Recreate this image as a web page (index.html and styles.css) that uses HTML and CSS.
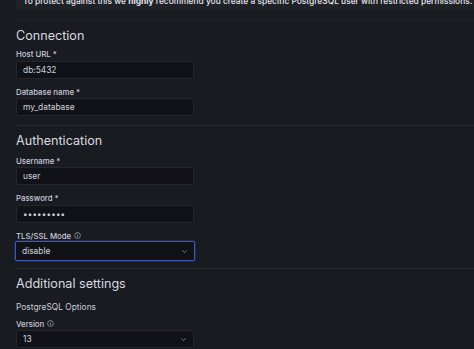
FILE: index.html
```html
<!DOCTYPE html>
<html>
<head>
<meta charset="utf-8">
<link rel="stylesheet" href="styles.css">
</head>
<body>
<div class="page">
  <div class="notice">To protect against this we <b>highly</b> recommend you create a specific PostgreSQL user with restricted permissions. Check out the docs for more information.</div>
  <div class="sep first"></div>

  <h3 class="heading h-conn">Connection</h3>
  <div class="field f-first">
    <label class="label">Host URL *</label>
    <div class="input">db:5432</div>
  </div>
  <div class="field">
    <label class="label">Database name *</label>
    <div class="input">my_database</div>
  </div>
  <div class="sep"></div>

  <h3 class="heading">Authentication</h3>
  <div class="field f-first">
    <label class="label">Username *</label>
    <div class="input">user</div>
  </div>
  <div class="field">
    <label class="label">Password *</label>
    <div class="input pw">&#8226;&#8226;&#8226;&#8226;&#8226;&#8226;&#8226;&#8226;&#8226;</div>
  </div>
  <div class="field">
    <label class="label">TLS/SSL Mode <svg class="info" viewBox="0 0 12 12"><circle cx="6" cy="6" r="5" fill="none" stroke="currentColor" stroke-width="1.2"/><line x1="6" y1="5.3" x2="6" y2="8.6" stroke="currentColor" stroke-width="1.3"/><circle cx="6" cy="3.5" r="0.75" fill="currentColor"/></svg></label>
    <div class="input select focus"><span>disable</span><svg class="chev" viewBox="0 0 10 6"><path d="M2 1.5 L5 4.5 L8 1.5" fill="none" stroke="currentColor" stroke-width="1.2"/></svg></div>
  </div>
  <div class="sep s-last"></div>

  <h3 class="heading h-add">Additional settings</h3>
  <div class="sub">PostgreSQL Options</div>
  <div class="field f-ver">
    <label class="label">Version <svg class="info" viewBox="0 0 12 12"><circle cx="6" cy="6" r="5" fill="none" stroke="currentColor" stroke-width="1.2"/><line x1="6" y1="5.3" x2="6" y2="8.6" stroke="currentColor" stroke-width="1.3"/><circle cx="6" cy="3.5" r="0.75" fill="currentColor"/></svg></label>
    <div class="input select"><span>13</span><svg class="chev" viewBox="0 0 10 6"><path d="M2 1.5 L5 4.5 L8 1.5" fill="none" stroke="currentColor" stroke-width="1.2"/></svg></div>
  </div>
</div>
</body>
</html>
```
FILE: styles.css
```css
html, body {
  margin: 0;
  padding: 0;
  background: #181b1f;
  overflow: hidden;
}
body {
  font-family: Inter, "Noto Sans", sans-serif;
  color: #ccccdc;
}
.page {
  padding-left: 16px;
  height: 349px;
  overflow: hidden;
}
.notice {
  margin-top: -7px;
  height: 16px;
  background: #1e2126;
  padding-left: 7px;
  font-size: 8.4px;
  line-height: 17px;
  font-weight: 500;
  color: #e6e6ee;
  white-space: nowrap;
  overflow: hidden;
}
.notice b { font-weight: 700; }
.sep {
  height: 1px;
  background: #26292f;
  margin-top: 9px;
}
.sep.first {
  margin-top: 10px;
  background: #202328;
}
.sep.s-last {
  margin-top: 7.5px;
}
.heading {
  margin: 7px 0 0 0;
  font-size: 12.6px;
  line-height: 16px;
  font-weight: 400;
  color: #d8d9e0;
}
.heading.h-conn {
  margin-top: 8px;
}
.heading.h-add {
  margin-top: 7.5px;
}
.field {
  display: flex;
  flex-direction: column;
  margin-top: 8px;
}
.field.f-first { margin-top: 6.5px; }
.h-conn + .field.f-first { margin-top: 5px; }
.field.f-ver { margin-top: 6px; }
.label {
  display: flex;
  align-items: center;
  gap: 3px;
  font-size: 7.8px;
  line-height: 10px;
  height: 10px;
  font-weight: 500;
  color: #ccccdc;
  margin-bottom: 1.5px;
}
.info {
  width: 7px;
  height: 7px;
  color: #a8aab8;
}
.input {
  box-sizing: border-box;
  width: 178px;
  height: 18px;
  background: #111217;
  border: 1px solid #24262c;
  border-radius: 2px;
  padding-left: 6px;
  font-size: 8.4px;
  line-height: 16px;
  color: #d2d3de;
  display: flex;
  align-items: center;
}
.input.pw {
  letter-spacing: 0.2px;
  font-size: 8px;
}
.select {
  justify-content: space-between;
  padding-right: 6px;
}
.select.focus {
  height: 20px;
  width: 180px;
  margin-left: -1px;
  margin-top: -1px;
  margin-bottom: -1px;
  border: 1px solid #3f5ab3;
  box-shadow: 0 0 0 1px #1b2a55;
}
.chev {
  width: 7px;
  height: 5px;
  color: #8e90a0;
}
.sub {
  margin-top: 9.5px;
  font-size: 8.4px;
  line-height: 11px;
  color: #ccccdc;
}
```
